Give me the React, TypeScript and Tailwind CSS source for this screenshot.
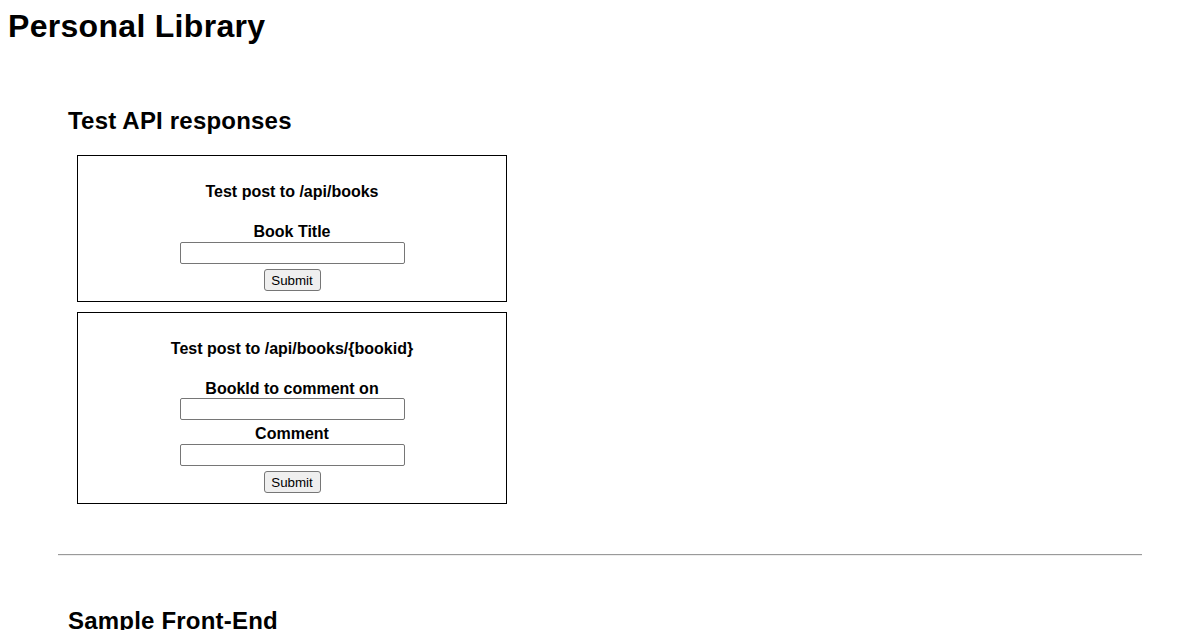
import React from 'react';

function Field({ label, first }: { label: string; first?: boolean }) {
  return (
    <>
      <label className={`${first ? 'mt-[22px]' : 'mt-[5px]'} text-[16px] leading-[18px] font-bold`}>{label}</label>
      <input
        type="text"
        className="mt-px h-[22px] w-[225px] border border-[#767676] rounded-[2px] bg-white px-[2px] text-[13.33px] outline-none"
      />
    </>
  );
}

function SubmitButton() {
  return (
    <button
      type="submit"
      className="mt-[5px] h-[22px] w-[57px] border border-[#767676] rounded-[3px] bg-[#efefef] text-[13.33px] leading-[15px] text-black"
    >
      Submit
    </button>
  );
}

export default function App() {
  return (
    <div className="h-screen overflow-hidden bg-white px-2 pt-2 text-black font-['Liberation_Sans',Arial,sans-serif]">
      <header>
        <h1 className="text-[32px] leading-[37px] font-bold tracking-[0.3px]">Personal Library</h1>
      </header>

      <div className="ml-[60px]">
        <h2 className="mt-[62px] text-[24px] leading-[28px] font-bold tracking-[0.2px]">Test API responses</h2>

        <form className="mt-[20px] ml-[9px] flex w-[430px] flex-col items-center border border-black pb-[10px]">
          <h4 className="mt-[27px] text-[16px] leading-[18px] font-bold">Test post to /api/books</h4>
          <Field label="Book Title" first />
          <SubmitButton />
        </form>

        <form className="mt-[10px] ml-[9px] flex w-[430px] flex-col items-center border border-black pb-[10px]">
          <h4 className="mt-[27px] text-[16px] leading-[18px] font-bold">Test post to /api/books/{'{bookid}'}</h4>
          <label className="mt-[22px] text-[16px] leading-[18px] font-bold">BookId to comment on</label>
          <input
            type="text"
            className="h-[22px] w-[225px] border border-[#767676] rounded-[2px] bg-white px-[2px] text-[13.33px] outline-none"
          />
          <Field label="Comment" />
          <SubmitButton />
        </form>
      </div>

      <hr className="mx-[50px] mt-[50px] h-0 border-t border-b border-t-[#9a9a9a] border-b-[#eeeeee]" />

      <div className="ml-[60px]">
        <h2 className="mt-[51px] text-[24px] leading-[28px] font-bold tracking-[0.2px]">Sample Front-End</h2>
      </div>
    </div>
  );
}
